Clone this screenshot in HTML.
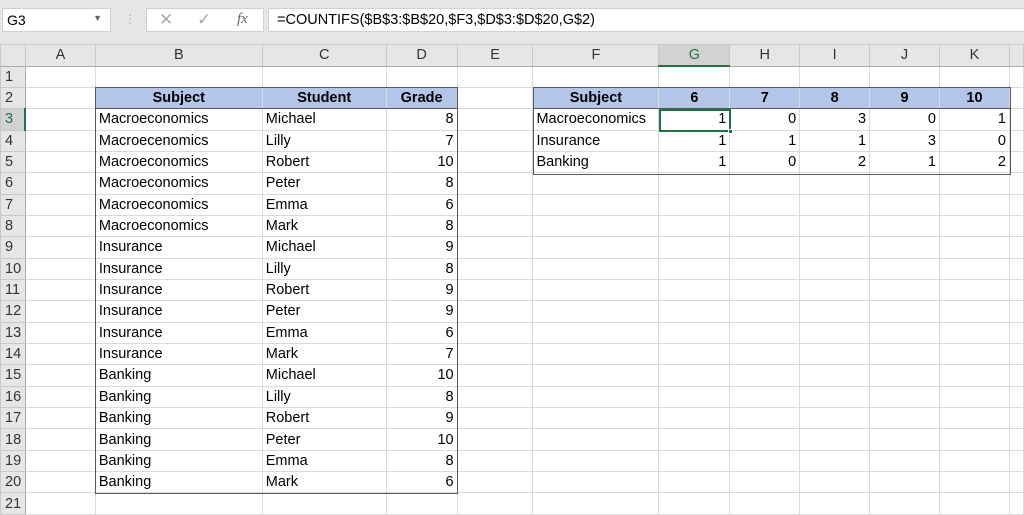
<!DOCTYPE html>
<html><head><meta charset="utf-8"><style>
*{margin:0;padding:0;box-sizing:border-box}
body{width:1024px;height:503px;overflow:hidden;background:#fff;font-family:"Liberation Sans",sans-serif;font-size:14.5px;color:#000;position:relative}
.top{position:absolute;left:0;top:0;width:1024px;height:44px;background:#e6e6e6}
.nb{position:absolute;left:2px;top:8px;width:109px;height:24px;background:#fff;border:1px solid #d0d0d0;font-size:14px;padding:3px 4px}
.fb{position:absolute;left:146px;top:8px;width:118px;height:24px;background:#fff;border:1px solid #d0d0d0}
.fx{position:absolute;left:268px;top:8px;width:760px;height:24px;background:#fff;border:1px solid #d0d0d0;font-size:14.5px;padding:3px 8px}
table{position:absolute;left:0;top:44px;border-collapse:collapse;table-layout:fixed}
td{border:1px solid #dadada;height:21.35px;padding:0 3px;white-space:nowrap;overflow:hidden;line-height:20px}
tr.ch td{height:21px;background:#e6e6e6;text-align:center;color:#333;border-color:#c8c8c8;border-bottom:1px solid #ababab}
td.rh{background:#e6e6e6;text-align:left;padding-left:4px;color:#333;border-color:#c8c8c8;border-right:1px solid #ababab}
td.h{background:#b4c6e7;font-weight:bold;text-align:center}
td.r{text-align:right}
.box{position:absolute;border:1px solid #595959;pointer-events:none}
</style></head><body>
<div class="top"></div>
<div class="nb">G3<span style="position:absolute;right:8px;top:4px;font-size:9px;color:#666">▼</span></div>
<div style="position:absolute;left:124px;top:12px;color:#aaa;font-size:12px">⋮</div>
<div class="fb"><span style="position:absolute;left:12px;top:1px;color:#aaa;font-size:17px">✕</span><span style="position:absolute;left:50px;top:1px;color:#aaa;font-size:17px">✓</span><span style="position:absolute;left:90px;top:2px;color:#666;font-family:'Liberation Serif',serif;font-style:italic;font-size:15px">fx</span></div>
<div class="fx">=COUNTIFS($B$3:$B$20,$F3,$D$3:$D$20,G$2)</div>
<table>
<colgroup><col style="width:25px"><col style="width:70px"><col style="width:167px"><col style="width:124px"><col style="width:71px"><col style="width:76px"><col style="width:126px"><col style="width:71px"><col style="width:70px"><col style="width:70px"><col style="width:70px"><col style="width:70px"><col style="width:14px"></colgroup>
<tr class="ch"><td style="background:#e6e6e6"></td><td>A</td><td>B</td><td>C</td><td>D</td><td>E</td><td>F</td><td style="background:#d2d2d2;color:#217346;border-bottom:2px solid #217346">G</td><td>H</td><td>I</td><td>J</td><td>K</td><td></td></tr>
<tr><td class="rh">1</td><td></td><td></td><td></td><td></td><td></td><td></td><td></td><td></td><td></td><td></td><td></td><td></td></tr>
<tr><td class="rh">2</td><td></td><td class="h">Subject</td><td class="h">Student</td><td class="h">Grade</td><td></td><td class="h">Subject</td><td class="h">6</td><td class="h">7</td><td class="h">8</td><td class="h">9</td><td class="h">10</td><td></td></tr>
<tr><td class="rh" style="background:#d2d2d2;color:#217346;border-right:2px solid #217346">3</td><td></td><td>Macroeconomics</td><td>Michael</td><td class="r">8</td><td></td><td>Macroeconomics</td><td class="r">1</td><td class="r">0</td><td class="r">3</td><td class="r">0</td><td class="r">1</td><td></td></tr>
<tr><td class="rh">4</td><td></td><td>Macroecenomics</td><td>Lilly</td><td class="r">7</td><td></td><td>Insurance</td><td class="r">1</td><td class="r">1</td><td class="r">1</td><td class="r">3</td><td class="r">0</td><td></td></tr>
<tr><td class="rh">5</td><td></td><td>Macroeconomics</td><td>Robert</td><td class="r">10</td><td></td><td>Banking</td><td class="r">1</td><td class="r">0</td><td class="r">2</td><td class="r">1</td><td class="r">2</td><td></td></tr>
<tr><td class="rh">6</td><td></td><td>Macroeconomics</td><td>Peter</td><td class="r">8</td><td></td><td></td><td></td><td></td><td></td><td></td><td></td><td></td></tr>
<tr><td class="rh">7</td><td></td><td>Macroeconomics</td><td>Emma</td><td class="r">6</td><td></td><td></td><td></td><td></td><td></td><td></td><td></td><td></td></tr>
<tr><td class="rh">8</td><td></td><td>Macroeconomics</td><td>Mark</td><td class="r">8</td><td></td><td></td><td></td><td></td><td></td><td></td><td></td><td></td></tr>
<tr><td class="rh">9</td><td></td><td>Insurance</td><td>Michael</td><td class="r">9</td><td></td><td></td><td></td><td></td><td></td><td></td><td></td><td></td></tr>
<tr><td class="rh">10</td><td></td><td>Insurance</td><td>Lilly</td><td class="r">8</td><td></td><td></td><td></td><td></td><td></td><td></td><td></td><td></td></tr>
<tr><td class="rh">11</td><td></td><td>Insurance</td><td>Robert</td><td class="r">9</td><td></td><td></td><td></td><td></td><td></td><td></td><td></td><td></td></tr>
<tr><td class="rh">12</td><td></td><td>Insurance</td><td>Peter</td><td class="r">9</td><td></td><td></td><td></td><td></td><td></td><td></td><td></td><td></td></tr>
<tr><td class="rh">13</td><td></td><td>Insurance</td><td>Emma</td><td class="r">6</td><td></td><td></td><td></td><td></td><td></td><td></td><td></td><td></td></tr>
<tr><td class="rh">14</td><td></td><td>Insurance</td><td>Mark</td><td class="r">7</td><td></td><td></td><td></td><td></td><td></td><td></td><td></td><td></td></tr>
<tr><td class="rh">15</td><td></td><td>Banking</td><td>Michael</td><td class="r">10</td><td></td><td></td><td></td><td></td><td></td><td></td><td></td><td></td></tr>
<tr><td class="rh">16</td><td></td><td>Banking</td><td>Lilly</td><td class="r">8</td><td></td><td></td><td></td><td></td><td></td><td></td><td></td><td></td></tr>
<tr><td class="rh">17</td><td></td><td>Banking</td><td>Robert</td><td class="r">9</td><td></td><td></td><td></td><td></td><td></td><td></td><td></td><td></td></tr>
<tr><td class="rh">18</td><td></td><td>Banking</td><td>Peter</td><td class="r">10</td><td></td><td></td><td></td><td></td><td></td><td></td><td></td><td></td></tr>
<tr><td class="rh">19</td><td></td><td>Banking</td><td>Emma</td><td class="r">8</td><td></td><td></td><td></td><td></td><td></td><td></td><td></td><td></td></tr>
<tr><td class="rh">20</td><td></td><td>Banking</td><td>Mark</td><td class="r">6</td><td></td><td></td><td></td><td></td><td></td><td></td><td></td><td></td></tr>
<tr><td class="rh">21</td><td></td><td></td><td></td><td></td><td></td><td></td><td></td><td></td><td></td><td></td><td></td><td></td></tr>
</table>
<div class="box" style="left:95px;top:87px;width:363px;height:407px"></div>
<div class="box" style="left:95px;top:108px;width:363px;height:1px;border-width:1px 0 0 0"></div>
<div class="box" style="left:533px;top:87px;width:478px;height:88px"></div>
<div class="box" style="left:533px;top:108px;width:478px;height:1px;border-width:1px 0 0 0"></div>
<div style="position:absolute;left:659px;top:109px;width:72px;height:23px;border:2px solid #217346"></div>
<div style="position:absolute;left:728px;top:129px;width:5px;height:5px;background:#217346;border:1px solid #fff"></div>
</body></html>
